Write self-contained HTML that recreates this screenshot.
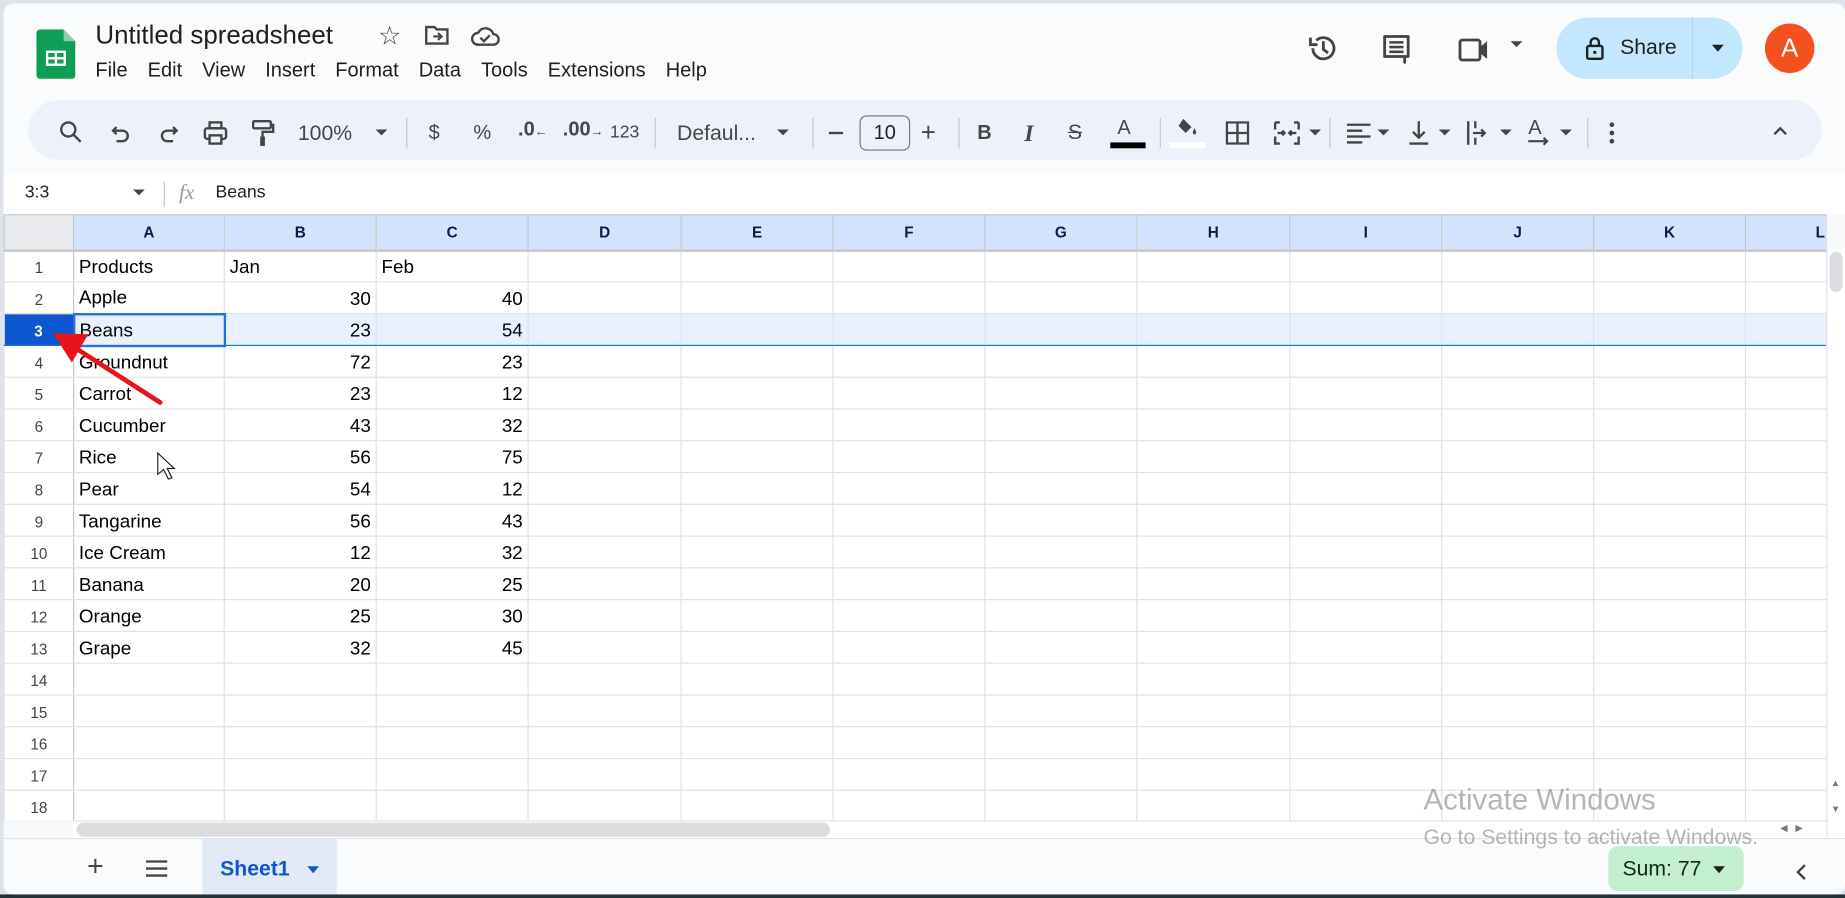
<!DOCTYPE html>
<html><head><meta charset="utf-8">
<style>
*{box-sizing:border-box;margin:0;padding:0}
html,body{width:1845px;height:898px;overflow:hidden;background:#dde3ea;font-family:"Liberation Sans",sans-serif}
#s{position:absolute;left:0;top:0;width:1567px;height:763px;transform:scale(1.17741,1.1769);transform-origin:0 0;background:#dde3ea}
#app{position:absolute;left:3px;top:3px;width:1564px;height:757px;background:#f9fbfd;border-radius:8px 8px 8px 8px;overflow:hidden}
.a{position:absolute}
.menu span{margin-right:17px}
.tb{color:#444746;font-size:17px}
.sep{position:absolute;top:97px;width:1px;height:26px;background:#c7c7c7}
table{border-collapse:collapse;table-layout:fixed;position:absolute;left:0;top:179px}
td{border:1px solid #e1e1e1;height:27px;font-size:16px;color:#000;padding:3px 4px 0;white-space:nowrap;overflow:hidden;background:#fff}
td.r{text-align:right}
td.h{background:#fff;color:#444;font-size:13px;text-align:center;border-right:1px solid #c4c7c5}
tr.ch td{background:#d3e3fd;color:#041e49;font-size:13px;font-weight:bold;text-align:center;height:30px;padding-top:0;border-color:#c4c7c5;border-bottom:2px solid #c4c7c5}
tr.sel td{background:#e8f0fe;border-top:1px solid #1a73e8;border-bottom:1px solid #1a73e8}
tr.sel td.h{background:#0b57d0;color:#fff;font-weight:bold}
</style></head><body><div id="s"><div id="app">
<svg class="a" style="left:28px;top:22px" width="33" height="42" viewBox="0 0 33 42"><path d="M3 0h20l10 10v29a3 3 0 0 1-3 3H3a3 3 0 0 1-3-3V3a3 3 0 0 1 3-3z" fill="#0f9d58"/><path d="M23 0l10 10H23z" fill="#87ceac"/><rect x="8" y="18" width="17" height="13" fill="#fff"/><rect x="10" y="20" width="5.5" height="3.5" fill="#0f9d58"/><rect x="17.5" y="20" width="5.5" height="3.5" fill="#0f9d58"/><rect x="10" y="25.5" width="5.5" height="3.5" fill="#0f9d58"/><rect x="17.5" y="25.5" width="5.5" height="3.5" fill="#0f9d58"/></svg>
<div class="a" style="left:78px;top:14px;font-size:22px;color:#1f1f1f">Untitled spreadsheet</div>
<div class="a" style="left:318px;top:15px;font-size:22px;color:#444">☆</div>
<svg class="a" style="left:357px;top:17px" width="22" height="20" viewBox="0 0 22 20"><path d="M2 3h7l2 2h9v12H2z" fill="none" stroke="#444" stroke-width="2"/><path d="M8 11h7m-3-3l3 3-3 3" stroke="#444" stroke-width="1.8" fill="none"/></svg>
<svg class="a" style="left:396px;top:17px" width="26" height="20" viewBox="0 0 26 20"><path d="M7 18a5 5 0 0 1 0-10 7 7 0 0 1 13 1 4.5 4.5 0 0 1 0 9z" fill="none" stroke="#444" stroke-width="2"/><path d="M9 12l3 3 5-5" stroke="#444" stroke-width="2" fill="none"/></svg>
<div class="a menu" style="left:78px;top:47px;font-size:17px;color:#1f1f1f"><span>File</span><span>Edit</span><span>View</span><span>Insert</span><span>Format</span><span>Data</span><span>Tools</span><span>Extensions</span><span>Help</span></div>
<svg class="a" style="left:1107px;top:24px" width="28" height="28" viewBox="0 0 28 28"><path d="M5 14a9 9 0 1 0 3-6.7" fill="none" stroke="#444" stroke-width="2.4"/><path d="M3 5v6h6" fill="none" stroke="#444" stroke-width="2.4"/><path d="M14 8v7l4 3" fill="none" stroke="#444" stroke-width="2.4"/></svg>
<svg class="a" style="left:1170px;top:25px" width="28" height="28" viewBox="0 0 28 28"><path d="M3 3h20v17h-3v5l-0-5H3z" fill="none" stroke="#444" stroke-width="2.4" stroke-linejoin="round"/><path d="M7 8h12M7 12h12M7 16h12" stroke="#444" stroke-width="2.2"/></svg>
<svg class="a" style="left:1234px;top:27px" width="32" height="24" viewBox="0 0 32 24"><rect x="3" y="4" width="17" height="17" rx="2" fill="none" stroke="#444" stroke-width="2.4"/><path d="M20 10l6-5v15l-6-5z" fill="#444"/></svg>
<div class="a" style="left:1280px;top:32px;border-left:5px solid transparent;border-right:5px solid transparent;border-top:5px solid #444"></div>
<div class="a" style="left:1319px;top:12px;width:158px;height:52px;border-radius:26px;background:#c2e7ff"></div>
<div class="a" style="left:1434px;top:12px;width:1px;height:52px;background:#aed4ef"></div>
<svg class="a" style="left:1343px;top:26px" width="18" height="24" viewBox="0 0 18 24"><rect x="2" y="10" width="13" height="11" rx="1.5" fill="none" stroke="#1f1f1f" stroke-width="2"/><path d="M5 10V7a3.5 3.5 0 0 1 7 0v3" fill="none" stroke="#1f1f1f" stroke-width="2"/><circle cx="8.5" cy="15.5" r="1.4" fill="#1f1f1f"/></svg>
<div class="a" style="left:1373px;top:27px;font-size:18px;color:#1f1f1f">Share</div>
<div class="a" style="left:1451px;top:35px;border-left:5px solid transparent;border-right:5px solid transparent;border-top:6px solid #1f1f1f"></div>
<div class="a" style="left:1496px;top:17px;width:42px;height:42px;border-radius:50%;background:#f4511e;color:#fff;font-size:22px;text-align:center;line-height:42px">A</div>
<div class="a" style="left:21px;top:82px;width:1523px;height:51px;border-radius:26px;background:#edf2fa"></div>
<svg class="a" style="left:47px;top:99px" width="20" height="20" viewBox="0 0 20 20"><circle cx="8" cy="8" r="6" fill="none" stroke="#444" stroke-width="2"/><path d="M12.5 12.5l6 6" stroke="#444" stroke-width="2"/></svg>
<svg class="a" style="left:90px;top:100px" width="20" height="20" viewBox="0 0 20 20"><path d="M6 5L3 8l3 3" fill="none" stroke="#444" stroke-width="2"/><path d="M3 8h8a4.5 4.5 0 0 1 0 9H6" fill="none" stroke="#444" stroke-width="2"/></svg>
<svg class="a" style="left:130px;top:100px" width="20" height="20" viewBox="0 0 20 20"><path d="M14 5l3 3-3 3" fill="none" stroke="#444" stroke-width="2"/><path d="M17 8H9a4.5 4.5 0 0 0 0 9h5" fill="none" stroke="#444" stroke-width="2"/></svg>
<svg class="a" style="left:169px;top:99px" width="22" height="22" viewBox="0 0 22 22"><rect x="6" y="2" width="10" height="5" fill="none" stroke="#444" stroke-width="2"/><rect x="2" y="7" width="18" height="9" rx="2" fill="none" stroke="#444" stroke-width="2"/><rect x="6" y="13" width="10" height="7" fill="#edf2fa" stroke="#444" stroke-width="2"/></svg>
<svg class="a" style="left:209px;top:98px" width="22" height="24" viewBox="0 0 22 24"><rect x="3" y="2" width="15" height="6" rx="1" fill="none" stroke="#444" stroke-width="2"/><path d="M18 5h2v6h-9v4" fill="none" stroke="#444" stroke-width="2"/><rect x="9" y="15" width="4" height="8" fill="#444"/></svg>
<div class="a tb" style="left:250px;top:100px;font-size:18px">100%</div>
<div class="a" style="left:316px;top:107px;border-left:5px solid transparent;border-right:5px solid transparent;border-top:5px solid #444"></div>
<div class="sep" style="left:342px"></div>
<div class="a tb" style="left:361px;top:100px">$</div>
<div class="a tb" style="left:399px;top:100px">%</div>
<div class="a tb" style="left:437px;top:97px;font-weight:bold">.0<span style="font-size:11px">←</span></div>
<div class="a tb" style="left:475px;top:97px;font-weight:bold">.00<span style="font-size:11px">→</span></div>
<div class="a tb" style="left:515px;top:101px;font-size:15px">123</div>
<div class="sep" style="left:553px"></div>
<div class="a tb" style="left:572px;top:100px;font-size:18px">Defaul...</div>
<div class="a" style="left:657px;top:107px;border-left:5px solid transparent;border-right:5px solid transparent;border-top:5px solid #444"></div>
<div class="sep" style="left:687px"></div>
<div class="a" style="left:701px;top:109px;width:12px;height:2px;background:#444"></div>
<div class="a" style="left:727px;top:95px;width:43px;height:30px;border:1px solid #747775;border-radius:6px;text-align:center;line-height:28px;font-size:17px;color:#1f1f1f">10</div>
<div class="a tb" style="left:779px;top:97px;font-size:22px">+</div>
<div class="sep" style="left:811px"></div>
<div class="a tb" style="left:827px;top:100px;font-weight:bold">B</div>
<div class="a tb" style="left:867px;top:100px;font-style:italic;font-family:'Liberation Serif',serif;font-size:20px;font-weight:bold">I</div>
<div class="a tb" style="left:904px;top:99px;font-size:18px;text-decoration:line-through">S</div>
<div class="a tb" style="left:946px;top:96px;font-size:17px">A</div>
<div class="a" style="left:940px;top:118px;width:30px;height:5px;background:#000"></div>
<div class="sep" style="left:982px"></div>
<svg class="a" style="left:994px;top:95px" width="24" height="22" viewBox="0 0 24 22"><path d="M5 3l7 7-5 5-6-6z" fill="#444" transform="translate(3 0)"/><path d="M19 14c0 3-3 3-3 0l1.5-3z" fill="#444"/></svg>
<div class="a" style="left:990px;top:118px;width:31px;height:5px;background:#fff"></div>
<svg class="a" style="left:1038px;top:100px" width="20" height="20" viewBox="0 0 20 20"><rect x="1" y="1" width="18" height="18" fill="none" stroke="#444" stroke-width="2"/><path d="M10 1v18M1 10h18" stroke="#444" stroke-width="2"/></svg>
<svg class="a" style="left:1078px;top:99px" width="24" height="22" viewBox="0 0 24 22"><path d="M2 2h4M2 2v6M2 14v6h4M22 2h-4M22 2v6M22 14v6h-4M4 11h6m-2-2l2 2-2 2M20 11h-6m2-2l-2 2 2 2" fill="none" stroke="#444" stroke-width="2"/></svg>
<div class="a" style="left:1109px;top:107px;border-left:5px solid transparent;border-right:5px solid transparent;border-top:5px solid #444"></div>
<div class="sep" style="left:1126px"></div>
<svg class="a" style="left:1140px;top:101px" width="22" height="20" viewBox="0 0 22 20"><path d="M1 2h20M1 7h13M1 12h20M1 17h13" stroke="#444" stroke-width="2"/></svg>
<div class="a" style="left:1167px;top:107px;border-left:5px solid transparent;border-right:5px solid transparent;border-top:5px solid #444"></div>
<svg class="a" style="left:1192px;top:99px" width="20" height="22" viewBox="0 0 20 22"><path d="M10 1v14m-5-5l5 5 5-5M2 20h16" fill="none" stroke="#444" stroke-width="2"/></svg>
<div class="a" style="left:1219px;top:107px;border-left:5px solid transparent;border-right:5px solid transparent;border-top:5px solid #444"></div>
<svg class="a" style="left:1242px;top:99px" width="22" height="22" viewBox="0 0 22 22"><path d="M2 1v20M8 1v6M8 15v6M6 11h10m-3-3l3 3-3 3" fill="none" stroke="#444" stroke-width="2"/></svg>
<div class="a" style="left:1271px;top:107px;border-left:5px solid transparent;border-right:5px solid transparent;border-top:5px solid #444"></div>
<div class="a tb" style="left:1295px;top:96px">A</div>
<svg class="a" style="left:1294px;top:112px" width="20" height="10" viewBox="0 0 20 10"><path d="M1 5h16m-3-3l3 3-3 3" fill="none" stroke="#444" stroke-width="1.8"/></svg>
<div class="a" style="left:1322px;top:107px;border-left:5px solid transparent;border-right:5px solid transparent;border-top:5px solid #444"></div>
<div class="sep" style="left:1345px"></div>
<div class="a" style="left:1364px;top:101px;width:4px;height:4px;border-radius:2px;background:#444;box-shadow:0 7px 0 #444,0 14px 0 #444"></div>
<svg class="a" style="left:1502px;top:103px" width="14" height="10" viewBox="0 0 14 10"><path d="M2 8l5-5 5 5" fill="none" stroke="#444" stroke-width="2"/></svg>
<div class="a" style="left:0;top:145px;width:1564px;height:34px;background:#fff"></div>
<div class="a" style="left:18px;top:152px;font-size:15px;color:#1f1f1f">3:3</div>
<div class="a" style="left:110px;top:158px;border-left:5px solid transparent;border-right:5px solid transparent;border-top:5px solid #444"></div>
<div class="a" style="left:136px;top:151px;width:1px;height:22px;background:#c7c7c7"></div>
<div class="a" style="left:149px;top:150px;font-family:'Liberation Serif',serif;font-style:italic;font-size:18px;color:#999">fx</div>
<div class="a" style="left:180px;top:152px;font-size:15px;color:#1f1f1f">Beans</div>
<table>
<colgroup><col style="width:59px"><col style="width:128px"><col style="width:129px"><col style="width:129px"><col style="width:130px"><col style="width:129px"><col style="width:129px"><col style="width:129px"><col style="width:130px"><col style="width:129px"><col style="width:129px"><col style="width:129px"><col style="width:70px"></colgroup>
<tr class="ch"><td style="background:#e8eaed"></td><td>A</td><td>B</td><td>C</td><td>D</td><td>E</td><td>F</td><td>G</td><td>H</td><td>I</td><td>J</td><td>K</td><td style="text-align:right;padding-right:2px">L</td></tr>
<tr><td class="h">1</td><td>Products</td><td>Jan</td><td>Feb</td><td></td><td></td><td></td><td></td><td></td><td></td><td></td><td></td><td></td></tr>
<tr><td class="h">2</td><td>Apple</td><td class="r">30</td><td class="r">40</td><td></td><td></td><td></td><td></td><td></td><td></td><td></td><td></td><td></td></tr>
<tr class="sel"><td class="h">3</td><td style="border:2px solid #1a73e8">Beans</td><td class="r">23</td><td class="r">54</td><td></td><td></td><td></td><td></td><td></td><td></td><td></td><td></td><td></td></tr>
<tr><td class="h">4</td><td>Groundnut</td><td class="r">72</td><td class="r">23</td><td></td><td></td><td></td><td></td><td></td><td></td><td></td><td></td><td></td></tr>
<tr><td class="h">5</td><td>Carrot</td><td class="r">23</td><td class="r">12</td><td></td><td></td><td></td><td></td><td></td><td></td><td></td><td></td><td></td></tr>
<tr><td class="h">6</td><td>Cucumber</td><td class="r">43</td><td class="r">32</td><td></td><td></td><td></td><td></td><td></td><td></td><td></td><td></td><td></td></tr>
<tr><td class="h">7</td><td>Rice</td><td class="r">56</td><td class="r">75</td><td></td><td></td><td></td><td></td><td></td><td></td><td></td><td></td><td></td></tr>
<tr><td class="h">8</td><td>Pear</td><td class="r">54</td><td class="r">12</td><td></td><td></td><td></td><td></td><td></td><td></td><td></td><td></td><td></td></tr>
<tr><td class="h">9</td><td>Tangarine</td><td class="r">56</td><td class="r">43</td><td></td><td></td><td></td><td></td><td></td><td></td><td></td><td></td><td></td></tr>
<tr><td class="h">10</td><td>Ice Cream</td><td class="r">12</td><td class="r">32</td><td></td><td></td><td></td><td></td><td></td><td></td><td></td><td></td><td></td></tr>
<tr><td class="h">11</td><td>Banana</td><td class="r">20</td><td class="r">25</td><td></td><td></td><td></td><td></td><td></td><td></td><td></td><td></td><td></td></tr>
<tr><td class="h">12</td><td>Orange</td><td class="r">25</td><td class="r">30</td><td></td><td></td><td></td><td></td><td></td><td></td><td></td><td></td><td></td></tr>
<tr><td class="h">13</td><td>Grape</td><td class="r">32</td><td class="r">45</td><td></td><td></td><td></td><td></td><td></td><td></td><td></td><td></td><td></td></tr>
<tr><td class="h">14</td><td></td><td></td><td></td><td></td><td></td><td></td><td></td><td></td><td></td><td></td><td></td><td></td></tr>
<tr><td class="h">15</td><td></td><td></td><td></td><td></td><td></td><td></td><td></td><td></td><td></td><td></td><td></td><td></td></tr>
<tr><td class="h">16</td><td></td><td></td><td></td><td></td><td></td><td></td><td></td><td></td><td></td><td></td><td></td><td></td></tr>
<tr><td class="h">17</td><td></td><td></td><td></td><td></td><td></td><td></td><td></td><td></td><td></td><td></td><td></td><td></td></tr>
<tr><td class="h">18</td><td></td><td></td><td></td><td></td><td></td><td></td><td></td><td></td><td></td><td></td><td></td><td></td></tr>
</table>
<div class="a" style="left:1548px;top:179px;width:16px;height:530px;background:#fff;border-left:1px solid #e1e1e1"></div>
<div class="a" style="left:1549px;top:179px;width:15px;height:30px;background:#f8f9fa"></div>
<div class="a" style="left:1551px;top:211px;width:11px;height:34px;border-radius:6px;background:#dadce0"></div>
<div class="a" style="left:1552px;top:658px;font-size:8px;color:#777">▲</div>
<div class="a" style="left:1552px;top:680px;font-size:8px;color:#777">▼</div>
<div class="a" style="left:0;top:694px;width:1548px;height:15px;background:#fff;border-top:1px solid #e1e1e1"></div>
<div class="a" style="left:0;top:694px;width:59px;height:15px;background:#f8f9fa"></div>
<div class="a" style="left:62px;top:696px;width:640px;height:12px;border-radius:6px;background:#dadce0"></div>
<div class="a" style="left:1509px;top:696px;font-size:8px;color:#777">◀ &nbsp; ▶</div>
<div class="a" style="left:0;top:709px;width:1564px;height:1px;background:#e1e1e1"></div>
<div class="a" style="left:71px;top:720px;font-size:24px;color:#444">+</div>
<svg class="a" style="left:120px;top:727px" width="20" height="16" viewBox="0 0 20 16"><path d="M1 2h18M1 8h18M1 14h18" stroke="#444" stroke-width="2"/></svg>
<div class="a" style="left:169px;top:710px;width:114px;height:47px;background:#e1e9f7"></div>
<div class="a" style="left:184px;top:725px;font-size:18px;color:#0b57d0;font-weight:bold">Sheet1</div>
<div class="a" style="left:258px;top:733px;border-left:5px solid transparent;border-right:5px solid transparent;border-top:6px solid #0b57d0"></div>
<div class="a" style="left:1363px;top:716px;width:115px;height:38px;border-radius:8px;background:#c4eed0"></div>
<div class="a" style="left:1375px;top:725px;font-size:18px;color:#0d2b17">Sum: 77</div>
<div class="a" style="left:1452px;top:733px;border-left:5px solid transparent;border-right:5px solid transparent;border-top:6px solid #1f1f1f"></div>
<svg class="a" style="left:1521px;top:730px" width="12" height="16" viewBox="0 0 12 16"><path d="M9 2L3 8l6 6" fill="none" stroke="#444" stroke-width="2"/></svg>
<div class="a" style="left:1206px;top:663px;font-size:25px;color:rgba(120,120,120,0.55)">Activate Windows</div>
<div class="a" style="left:1206px;top:698px;font-size:18px;color:rgba(120,120,120,0.55)">Go to Settings to activate Windows.</div>
<svg class="a" style="left:0;top:0" width="200" height="400" viewBox="0 0 200 400"><path d="M133 339L60 292" stroke="#e8141c" stroke-width="4" stroke-linecap="round"/><path d="M42 280L72 281L58 305z" fill="#e8141c"/></svg>
<svg class="a" style="left:130px;top:381px" width="18" height="26" viewBox="0 0 18 26"><path d="M1 1v18l5-4 4 8 3-1-4-8h6z" fill="#fff" stroke="#222" stroke-width="1"/></svg>
</div>
<div class="a" style="left:0;top:760px;width:1567px;height:3px;background:#243038"></div>
</div></body></html>
